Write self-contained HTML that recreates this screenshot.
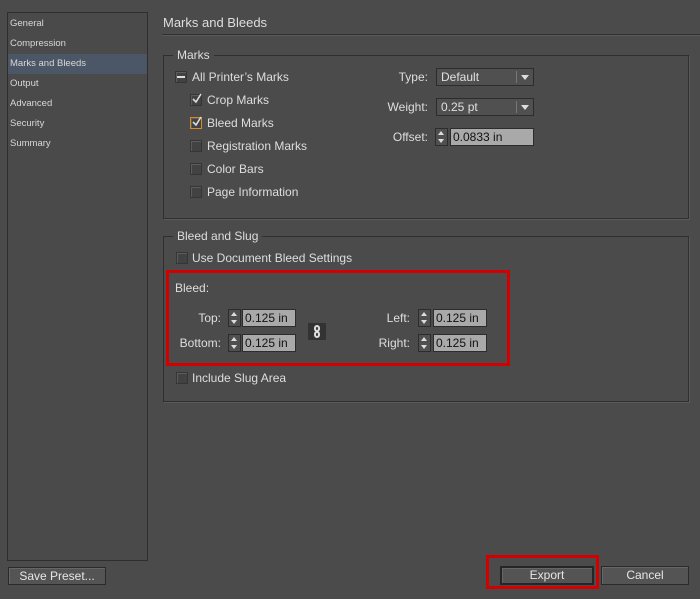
<!DOCTYPE html>
<html><head><style>
*{margin:0;padding:0;box-sizing:border-box}
body{width:700px;height:599px;background:#4b4b4b;font-family:"Liberation Sans","DejaVu Sans",sans-serif;color:#dedede;position:relative;overflow:hidden;font-size:12px}
.a{position:absolute;white-space:nowrap}
.side{left:7px;top:12px;width:141px;height:549px;border:1px solid #2e2e2e;background:#4a4a4a}
.si{position:absolute;left:2px;font-size:9.5px;color:#d8d8d8;height:20px;line-height:20px;width:133px}
.box{border:1px solid #2f2f2f;box-shadow:1px 1px 0 #5a5a5a}
.leg{background:#4b4b4b;padding:0 4px;font-size:12px}
.cb{width:12px;height:12px;background:#424242;border:1px solid #353535;box-shadow:inset 1px 1px 0 #5c5c5c}
.lbl{font-size:12px;line-height:14px}
.dd{height:18px;border:1px solid #2c2c2c;background:#505050;color:#e0e0e0;padding-left:4px;line-height:16px;font-size:12px}
.dd:after{content:"";position:absolute;right:16px;top:2px;width:1px;height:12px;background:#777}
.dd i{position:absolute;right:4px;top:6px;border-left:4px solid transparent;border-right:4px solid transparent;border-top:5px solid #ddd}
.sp{width:13px;height:18px;background:#505050;border:1px solid #2c2c2c}
.sp:before{content:"";position:absolute;left:2px;top:2px;border-left:3px solid transparent;border-right:3px solid transparent;border-bottom:4px solid #ddd}
.sp:after{content:"";position:absolute;left:2px;bottom:2px;border-left:3px solid transparent;border-right:3px solid transparent;border-top:4px solid #ddd}
.in{height:18px;background:#a9a9a9;border:1px solid #2c2c2c;color:#111;font-size:12px;line-height:16px;padding-left:2px}
.btn{height:18px;border:1px solid #2a2a2a;background:#545454;box-shadow:inset 1px 1px 0 #666;text-align:center;font-size:12px;line-height:16px;color:#e6e6e6}
</style></head><body>
<div class="a side">
<div class="si" style="top:1px">General</div>
<div class="si" style="top:21px">Compression</div>
<div class="si" style="top:41px;left:0;width:139px;padding-left:2px;background:#4b5666">Marks and Bleeds</div>
<div class="si" style="top:61px">Output</div>
<div class="si" style="top:81px">Advanced</div>
<div class="si" style="top:101px">Security</div>
<div class="si" style="top:121px">Summary</div>
</div>
<div class="a" style="left:163px;top:15px;font-size:13px">Marks and Bleeds</div>
<div class="a" style="left:162px;top:34px;width:538px;height:1px;background:#2f2f2f;box-shadow:0 1px 0 #5a5a5a"></div>

<div class="a box" style="left:163px;top:55px;width:526px;height:164px"></div>
<div class="a leg" style="left:173px;top:48px">Marks</div>
<div class="a cb" style="left:175px;top:71px"></div><div class="a" style="left:177px;top:76px;width:8px;height:2px;background:#ddd"></div>
<div class="a lbl" style="left:192px;top:70px">All Printer’s Marks</div>
<div class="a cb" style="left:190px;top:94px"></div>
<svg class="a" style="left:190px;top:92px" width="13" height="14"><path d="M3 7 L6 10 L11 2" stroke="#ddd" stroke-width="1.6" fill="none"/></svg>
<div class="a lbl" style="left:207px;top:93px">Crop Marks</div>
<div class="a cb" style="left:190px;top:117px;border-color:#d68a2a"></div>
<svg class="a" style="left:190px;top:115px" width="13" height="14"><path d="M3 7 L6 10 L11 2" stroke="#ddd" stroke-width="1.6" fill="none"/></svg>
<div class="a lbl" style="left:207px;top:116px">Bleed Marks</div>
<div class="a cb" style="left:190px;top:140px"></div><div class="a lbl" style="left:207px;top:139px">Registration Marks</div>
<div class="a cb" style="left:190px;top:163px"></div><div class="a lbl" style="left:207px;top:162px">Color Bars</div>
<div class="a cb" style="left:190px;top:186px"></div><div class="a lbl" style="left:207px;top:185px">Page Information</div>

<div class="a lbl" style="left:360px;width:68px;text-align:right;top:70px">Type:</div>
<div class="a dd" style="left:436px;top:68px;width:98px">Default<i></i></div>
<div class="a lbl" style="left:360px;width:68px;text-align:right;top:100px">Weight:</div>
<div class="a dd" style="left:436px;top:98px;width:98px">0.25 pt<i></i></div>
<div class="a lbl" style="left:360px;width:68px;text-align:right;top:130px">Offset:</div>
<div class="a sp" style="left:435px;top:128px"></div>
<div class="a in" style="left:450px;top:128px;width:84px">0.0833 in</div>

<div class="a box" style="left:163px;top:236px;width:526px;height:166px"></div>
<div class="a leg" style="left:173px;top:229px">Bleed and Slug</div>
<div class="a cb" style="left:176px;top:252px"></div><div class="a lbl" style="left:192px;top:251px">Use Document Bleed Settings</div>
<div class="a" style="left:166px;top:270px;width:344px;height:96px;border:3px solid #d40000"></div>
<div class="a lbl" style="left:175px;top:281px">Bleed:</div>
<div class="a lbl" style="left:160px;width:61px;text-align:right;top:311px">Top:</div>
<div class="a sp" style="left:228px;top:309px"></div><div class="a in" style="left:242px;top:309px;width:54px">0.125 in</div>
<div class="a lbl" style="left:160px;width:61px;text-align:right;top:336px">Bottom:</div>
<div class="a sp" style="left:228px;top:334px"></div><div class="a in" style="left:242px;top:334px;width:54px">0.125 in</div>
<div class="a" style="left:308px;top:323px;width:18px;height:17px;background:#333"></div>
<div class="a" style="left:314px;top:325px;width:6px;height:7px;border:2px solid #ddd;border-radius:3px"></div>
<div class="a" style="left:314px;top:331px;width:6px;height:7px;border:2px solid #ddd;border-radius:3px"></div>
<div class="a lbl" style="left:350px;width:60px;text-align:right;top:311px">Left:</div>
<div class="a sp" style="left:418px;top:309px"></div><div class="a in" style="left:433px;top:309px;width:54px">0.125 in</div>
<div class="a lbl" style="left:350px;width:60px;text-align:right;top:336px">Right:</div>
<div class="a sp" style="left:418px;top:334px"></div><div class="a in" style="left:433px;top:334px;width:54px">0.125 in</div>
<div class="a cb" style="left:176px;top:372px"></div><div class="a lbl" style="left:192px;top:371px">Include Slug Area</div>

<div class="a btn" style="left:8px;top:567px;width:98px">Save Preset...</div>
<div class="a" style="left:486px;top:555px;width:113px;height:34px;border:3px solid #d40000"></div>
<div class="a btn" style="left:500px;top:566px;width:94px;height:19px;border:2px solid #262626;line-height:15px">Export</div>
<div class="a btn" style="left:601px;top:566px;width:88px;height:19px;line-height:17px">Cancel</div>
</body></html>
